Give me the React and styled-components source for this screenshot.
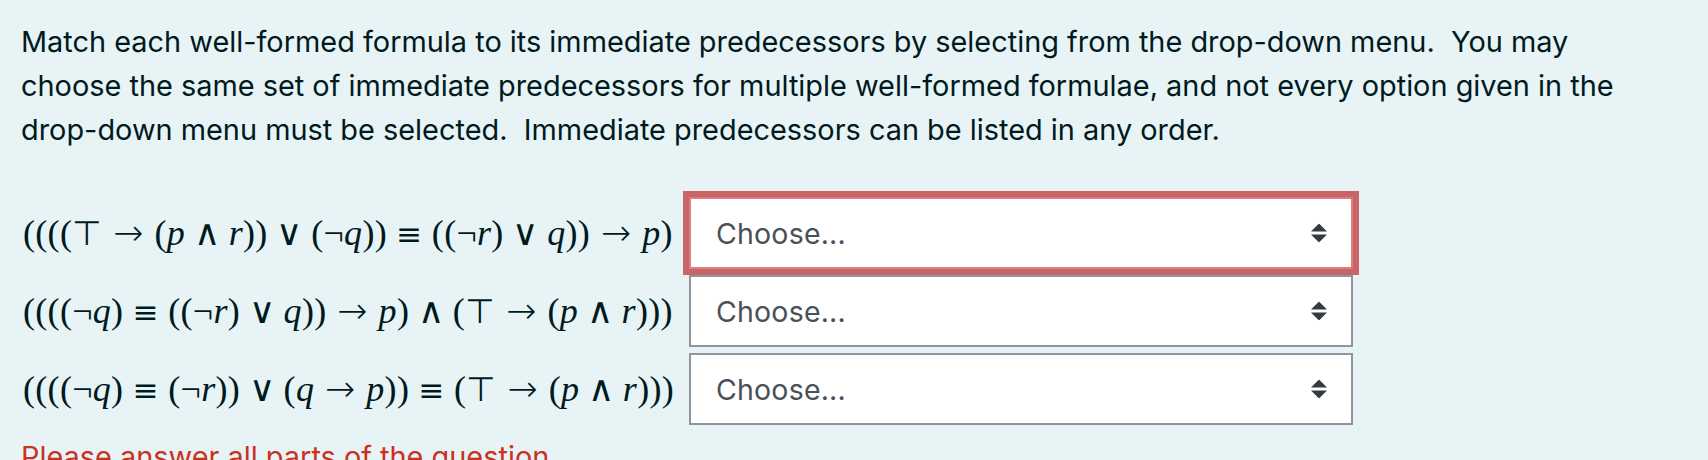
import React from 'react';
import styled, { createGlobalStyle } from 'styled-components';

const GlobalStyle = createGlobalStyle`
  html, body {
    margin: 0;
    padding: 0;
    background: #e7f3f5;
  }

  body {
    font-family: Inter, "Noto Sans", sans-serif;
    color: #001a1e;
  }
`;

const Formulation = styled.div`
  padding: 20px 21px 0;
`;

const Prompt = styled.p`
  margin: 0;
  max-width: 1635px;
  font-size: 28.9px;
  line-height: 44px;
`;

const MatchTable = styled.div`
  display: grid;
  grid-template-columns: 668px 664px;
  row-gap: 6px;
  align-items: center;
  margin-top: 45px;
`;

const Formula = styled.div`
  font-family: "Liberation Serif", "DejaVu Serif", serif;
  font-size: 36px;
  letter-spacing: 0.3px;
  line-height: 1;
  white-space: nowrap;
  padding-left: 2px;
`;

const Var = styled.span`
  font-style: italic;
`;

const Op = styled.span`
  font-family: "DejaVu Sans", sans-serif;
  font-weight: ${({ $heavy }) => ($heavy ? 400 : 200)};
  font-size: ${({ $heavy }) => ($heavy ? '0.86em' : '1em')};
  margin: 0 ${({ $rel }) => ($rel ? '0.3em' : '0.24em')};
`;

const Top = styled.span`
  font-family: "DejaVu Sans", sans-serif;
  font-weight: 200;
  font-size: 0.95em;
`;

const SelectWrap = styled.div`
  position: relative;
  width: 664px;
  height: 72px;
`;

const Select = styled.select`
  appearance: none;
  width: 100%;
  height: 100%;
  box-sizing: border-box;
  margin: 0;
  padding: 0 60px 0 25px;
  border: 2px solid ${({ $invalid }) => ($invalid ? '#df7e82' : '#8f959e')};
  border-radius: 0;
  box-shadow: ${({ $invalid }) => ($invalid ? '0 0 0 6px #c96467' : 'none')};
  background: #fff;
  color: #495057;
  font-family: Inter, "Noto Sans", sans-serif;
  font-size: 28.5px;
  letter-spacing: 0.2px;
  outline: none;
`;

const Arrows = styled.svg`
  position: absolute;
  right: 26px;
  top: 50%;
  transform: translateY(-50%);
  pointer-events: none;
`;

const ErrorText = styled.div`
  margin-top: 10px;
  font-size: 28.9px;
  line-height: 44px;
  color: #ca3120;
`;

const formulas = [
  '((((⊤ → (p ∧ r)) ∨ (¬q)) ≡ ((¬r) ∨ q)) → p)',
  '((((¬q) ≡ ((¬r) ∨ q)) → p) ∧ (⊤ → (p ∧ r)))',
  '((((¬q) ≡ (¬r)) ∨ (q → p)) ≡ (⊤ → (p ∧ r)))',
];

const renderFormula = (text) =>
  [...text.replace(/ /g, '')].map((ch, i) => {
    if ('pqr'.includes(ch)) return <Var key={i}>{ch}</Var>;
    if (ch === '⊤') return <Top key={i}>{ch}</Top>;
    if (ch === '→') return <Op key={i} $rel>{ch}</Op>;
    if (ch === '≡') return <Op key={i} $rel $heavy>{ch}</Op>;
    if (ch === '∧' || ch === '∨') return <Op key={i}>{ch}</Op>;
    return <span key={i}>{ch}</span>;
  });

const UpDown = () => (
  <Arrows width="16" height="19" viewBox="0 0 16 19">
    <polygon points="0,8 8,0 16,8" fill="#343a40" />
    <polygon points="0,11 16,11 8,19" fill="#343a40" />
  </Arrows>
);

const App = () => {
  return (
    <Formulation>
      <GlobalStyle />
      <Prompt>
        Match each well-formed formula to its immediate predecessors by selecting from the drop-down menu.{'\u00a0 '}You may
        choose the same set of immediate predecessors for multiple well-formed formulae, and not every option given in the
        drop-down menu must be selected.{'\u00a0 '}Immediate predecessors can be listed in any order.
      </Prompt>

      <MatchTable>
        {formulas.map((f, i) => (
          <React.Fragment key={i}>
            <Formula>{renderFormula(f)}</Formula>
            <SelectWrap>
              <Select $invalid={i === 0} defaultValue="">
                <option value="">Choose...</option>
              </Select>
              <UpDown />
            </SelectWrap>
          </React.Fragment>
        ))}
      </MatchTable>

      <ErrorText>Please answer all parts of the question.</ErrorText>
    </Formulation>
  );
};

export default App;
